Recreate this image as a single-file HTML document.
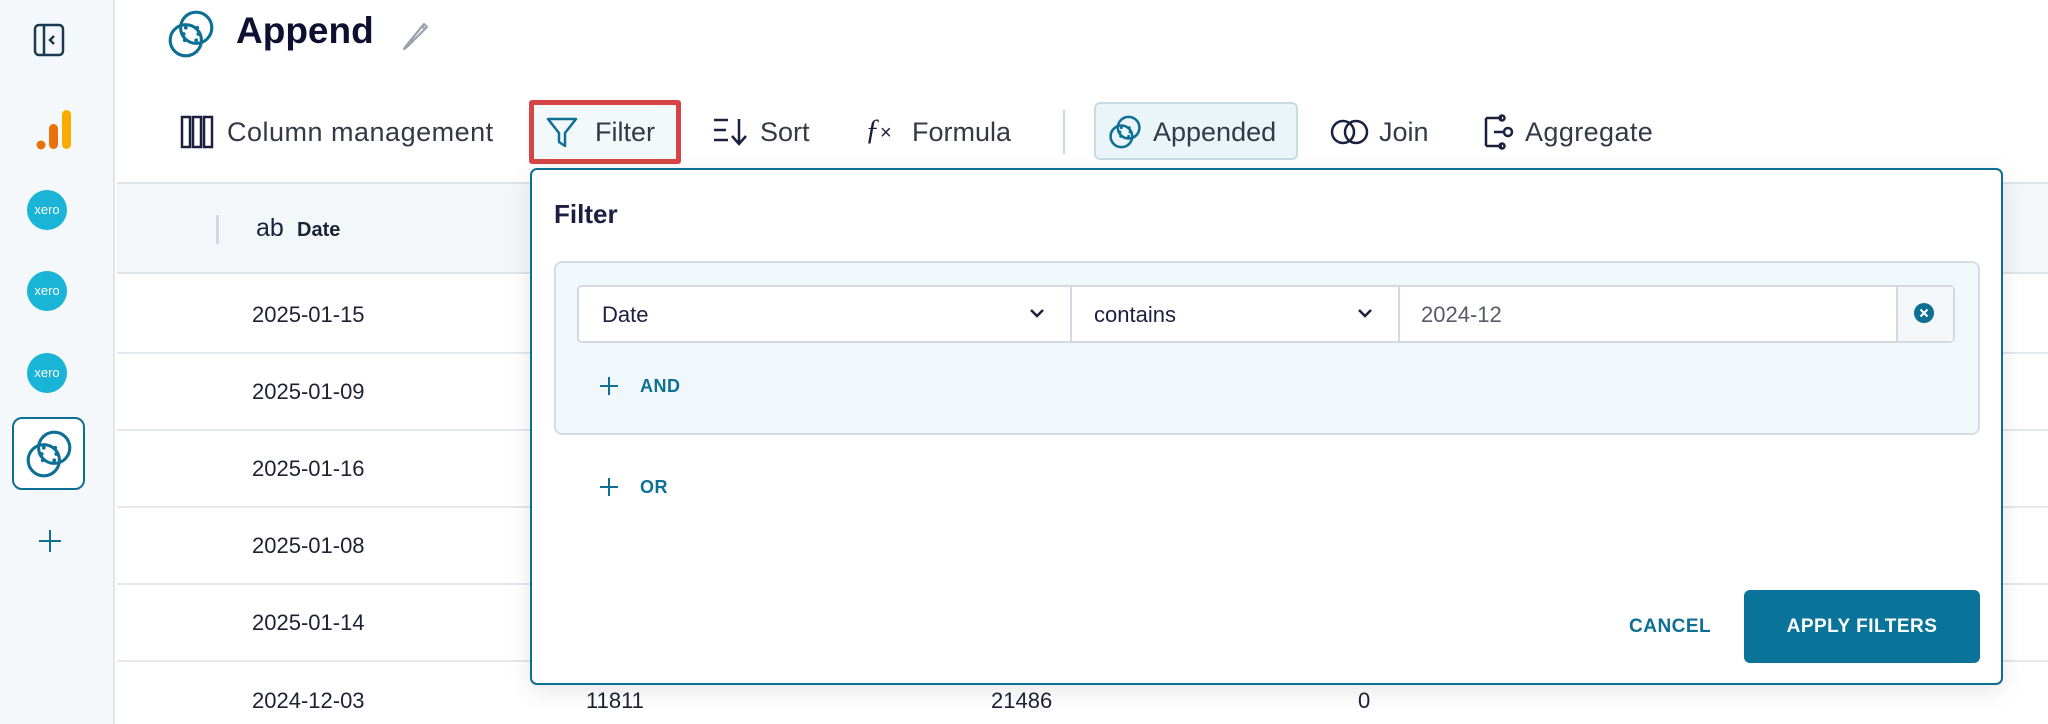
<!DOCTYPE html>
<html><head><meta charset="utf-8">
<style>
*{box-sizing:border-box;margin:0;padding:0}
body{width:2048px;height:724px;overflow:hidden;background:#fff;font-family:"Liberation Sans",sans-serif;color:#1c2233;position:relative}
.abs{position:absolute}
.side{left:0;top:0;width:115px;height:724px;background:#f4f8fa;border-right:2px solid #dfe5e9}
.xero{width:40px;height:40px;border-radius:50%;background:#1ab4d7;color:#fff;font-size:13px;text-align:center;line-height:40px;left:27px}
.tb{font-size:27px;color:#333a45;top:116px;line-height:32px}
.row{left:117px;width:1931px;height:2px;background:#e3e8ee}
.date{left:252px;font-size:22px;color:#1c2233}
</style></head><body>
<div class="abs side"></div>
<svg class="abs" style="left:33px;top:23px" width="32" height="34" viewBox="0 0 32 34"><rect x="2" y="2" width="28" height="30" rx="4" fill="none" stroke="#1e3a4e" stroke-width="2.5"/><line x1="11" y1="2" x2="11" y2="32" stroke="#1e3a4e" stroke-width="2.5"/><path d="M21 13 l-4 4 4 4" fill="none" stroke="#1e3a4e" stroke-width="2.5"/></svg>
<svg class="abs" style="left:34px;top:108px" width="40" height="42"><circle cx="7" cy="37" r="4.5" fill="#e8710a"/><rect x="15" y="16" width="9" height="25" rx="4.5" fill="#e8710a"/><rect x="28" y="2" width="9" height="39" rx="4.5" fill="#f9ab00"/></svg>
<div class="abs xero" style="top:190px">xero</div>
<div class="abs xero" style="top:271px">xero</div>
<div class="abs xero" style="top:353px">xero</div>
<div class="abs" style="left:12px;top:417px;width:73px;height:73px;border:2px solid #0e6f95;border-radius:10px;background:#fff"></div>
<svg class="abs" style="left:23px;top:428px" width="52" height="52" viewBox="0 0 50 50"><circle cx="30" cy="19" r="15" fill="none" stroke="#0e6f95" stroke-width="3"/><circle cx="20" cy="31" r="15" fill="none" stroke="#0e6f95" stroke-width="3"/><g fill="#0e6f95"><circle cx="20" cy="19" r="1.8"/><circle cx="18" cy="25" r="1.8"/><circle cx="19" cy="31" r="1.8"/><circle cx="31" cy="19" r="1.8"/><circle cx="32" cy="25" r="1.8"/><circle cx="30" cy="31" r="1.8"/></g></svg>
<div class="abs" style="left:49px;top:530px;width:2px;height:22px;background:#0e6f95"></div>
<div class="abs" style="left:39px;top:540px;width:22px;height:2px;background:#0e6f95"></div>

<svg class="abs" style="left:165px;top:8px" width="52" height="52" viewBox="0 0 50 50"><circle cx="30" cy="19" r="15" fill="#fff" stroke="#0e6f95" stroke-width="3"/><circle cx="20" cy="31" r="15" fill="none" stroke="#0e6f95" stroke-width="3"/><g fill="#0e6f95"><circle cx="20" cy="19" r="1.8"/><circle cx="18" cy="25" r="1.8"/><circle cx="19" cy="31" r="1.8"/><circle cx="31" cy="19" r="1.8"/><circle cx="32" cy="25" r="1.8"/><circle cx="30" cy="31" r="1.8"/></g></svg>
<div class="abs" style="left:236px;top:10px;font-size:37px;font-weight:bold;color:#0d1030">Append</div>
<svg class="abs" style="left:400px;top:18px" width="30" height="32"><path d="M6 28 L4 31 L7 29 L27 9 L24 6 Z M22 8 l3 3" fill="none" stroke="#9aa3ad" stroke-width="2.2" stroke-linejoin="round"/></svg>

<svg class="abs" style="left:180px;top:115px" width="34" height="34"><g fill="none" stroke="#1c2040" stroke-width="2.5"><rect x="2" y="2" width="8" height="30"/><rect x="13" y="2" width="8" height="30"/><rect x="24" y="2" width="8" height="30"/></g></svg>
<div class="abs tb" style="left:227px;letter-spacing:.5px">Column management</div>
<div class="abs" style="left:529px;top:100px;width:152px;height:64px;border:5px solid #d64545;border-radius:3px;background:#f3f9fb"></div>
<svg class="abs" style="left:545px;top:115px" width="34" height="34"><path d="M3 4 H31 L20 18 V31 L14 27 V18 Z" fill="none" stroke="#0e6f95" stroke-width="2.5" stroke-linejoin="round"/></svg>
<div class="abs tb" style="left:595px">Filter</div>
<svg class="abs" style="left:712px;top:117px" width="36" height="30"><g stroke="#1c2040" stroke-width="2.5" fill="none"><path d="M2 3H16M2 13H14M2 23H16M27 2V26M20 19l7 8 7-8"/></g></svg>
<div class="abs tb" style="left:760px">Sort</div>
<div class="abs" style="left:865px;top:113px;font-size:30px;font-style:italic;font-family:'Liberation Serif',serif;color:#1c2040">ƒ<span style="font-size:20px;font-style:normal;font-family:'Liberation Sans'">×</span></div>
<div class="abs tb" style="left:912px">Formula</div>
<div class="abs" style="left:1063px;top:110px;width:2px;height:44px;background:#cfd6dc"></div>
<div class="abs" style="left:1094px;top:102px;width:204px;height:58px;border:2px solid #c6dbe4;border-radius:6px;background:#eaf5fa"></div>
<svg class="abs" style="left:1107px;top:114px" width="36" height="36" viewBox="0 0 50 50"><circle cx="30" cy="19" r="15" fill="none" stroke="#0e6f95" stroke-width="3.5"/><circle cx="20" cy="31" r="15" fill="none" stroke="#0e6f95" stroke-width="3.5"/><g fill="#0e6f95"><circle cx="20" cy="19" r="2"/><circle cx="18" cy="25" r="2"/><circle cx="19" cy="31" r="2"/><circle cx="31" cy="19" r="2"/><circle cx="32" cy="25" r="2"/><circle cx="30" cy="31" r="2"/></g></svg>
<div class="abs tb" style="left:1153px">Appended</div>
<svg class="abs" style="left:1330px;top:118px" width="40" height="28"><g fill="none" stroke="#1c2040" stroke-width="2.5"><circle cx="13" cy="14" r="11"/><circle cx="26" cy="14" r="11"/></g></svg>
<div class="abs tb" style="left:1379px">Join</div>
<svg class="abs" style="left:1484px;top:114px" width="32" height="36"><g fill="none" stroke="#1c2040" stroke-width="2.5"><path d="M2 4H18M2 32H18M2 4V32M10 18H20"/><circle cx="24" cy="18" r="4"/><circle cx="18" cy="4" r="2.5"/><circle cx="18" cy="32" r="2.5"/></g></svg>
<div class="abs tb" style="left:1525px;letter-spacing:.4px">Aggregate</div>

<div class="abs" style="left:117px;top:182px;width:1931px;height:92px;background:#f3f7f9;border-top:2px solid #dfe4e8;border-bottom:2px solid #dfe4e8"></div>
<div class="abs" style="left:216px;top:215px;width:3px;height:29px;background:#d3d9de"></div>
<div class="abs" style="left:256px;top:214px;font-size:25px;color:#1c2040">ab</div>
<div class="abs" style="left:297px;top:219px;font-size:20px;font-weight:bold;color:#1c2233">Date</div>
<div class="abs row" style="top:352px"></div>
<div class="abs row" style="top:429px"></div>
<div class="abs row" style="top:506px"></div>
<div class="abs row" style="top:583px"></div>
<div class="abs row" style="top:660px"></div>
<div class="abs date" style="top:302px">2025-01-15</div>
<div class="abs date" style="top:379px">2025-01-09</div>
<div class="abs date" style="top:456px">2025-01-16</div>
<div class="abs date" style="top:533px">2025-01-08</div>
<div class="abs date" style="top:610px">2025-01-14</div>
<div class="abs date" style="top:688px">2024-12-03</div>
<div class="abs date" style="left:586px;top:688px">11811</div>
<div class="abs date" style="left:991px;top:688px">21486</div>
<div class="abs date" style="left:1358px;top:688px">0</div>

<div class="abs" style="left:530px;top:168px;width:1473px;height:517px;border:2px solid #0e6f95;border-radius:7px;background:#fff;box-shadow:0 6px 24px rgba(0,0,0,.1)"></div>
<div class="abs" style="left:554px;top:199px;font-size:26px;font-weight:bold;color:#1c2040">Filter</div>
<div class="abs" style="left:554px;top:261px;width:1426px;height:174px;background:#f1f8fb;border:2px solid #d3dee4;border-radius:8px"></div>
<div class="abs" style="left:577px;top:285px;width:1378px;height:58px;background:#fff;border:2px solid #d3d9de;border-radius:5px"></div>
<div class="abs" style="left:1070px;top:287px;width:2px;height:54px;background:#d3d9de"></div>
<div class="abs" style="left:1398px;top:287px;width:2px;height:54px;background:#d3d9de"></div>
<div class="abs" style="left:1896px;top:287px;width:57px;height:54px;background:#f4f7f9;border-left:2px solid #d3d9de"></div>
<div class="abs" style="left:602px;top:302px;font-size:22px;color:#1c2040">Date</div>
<svg class="abs" style="left:1029px;top:308px" width="16" height="10"><path d="M2 2l6 6 6-6" fill="none" stroke="#1c2040" stroke-width="2.5"/></svg>
<div class="abs" style="left:1094px;top:302px;font-size:22px;color:#1c2040">contains</div>
<svg class="abs" style="left:1357px;top:308px" width="16" height="10"><path d="M2 2l6 6 6-6" fill="none" stroke="#1c2040" stroke-width="2.5"/></svg>
<div class="abs" style="left:1421px;top:302px;font-size:22px;color:#555c66">2024-12</div>
<svg class="abs" style="left:1913px;top:302px" width="22" height="22"><circle cx="11" cy="11" r="10" fill="#0e6f95"/><path d="M7.5 7.5l7 7M14.5 7.5l-7 7" stroke="#fff" stroke-width="2"/></svg>
<div class="abs" style="left:600px;top:385px;width:18px;height:2px;background:#0e6f95"></div>
<div class="abs" style="left:608px;top:377px;width:2px;height:18px;background:#0e6f95"></div>
<div class="abs" style="left:640px;top:376px;font-size:18px;font-weight:bold;color:#0e6f95;letter-spacing:.5px;line-height:20px">AND</div>
<div class="abs" style="left:600px;top:486px;width:18px;height:2px;background:#0e6f95"></div>
<div class="abs" style="left:608px;top:478px;width:2px;height:18px;background:#0e6f95"></div>
<div class="abs" style="left:640px;top:477px;font-size:18px;font-weight:bold;color:#0e6f95;letter-spacing:.5px;line-height:20px">OR</div>
<div class="abs" style="left:1629px;top:616px;font-size:19px;font-weight:bold;color:#0e6f95;letter-spacing:.5px">CANCEL</div>
<div class="abs" style="left:1744px;top:590px;width:236px;height:73px;background:#0a7399;border-radius:6px;color:#fff;font-size:19px;font-weight:bold;text-align:center;line-height:73px;letter-spacing:.5px">APPLY FILTERS</div>
</body></html>
